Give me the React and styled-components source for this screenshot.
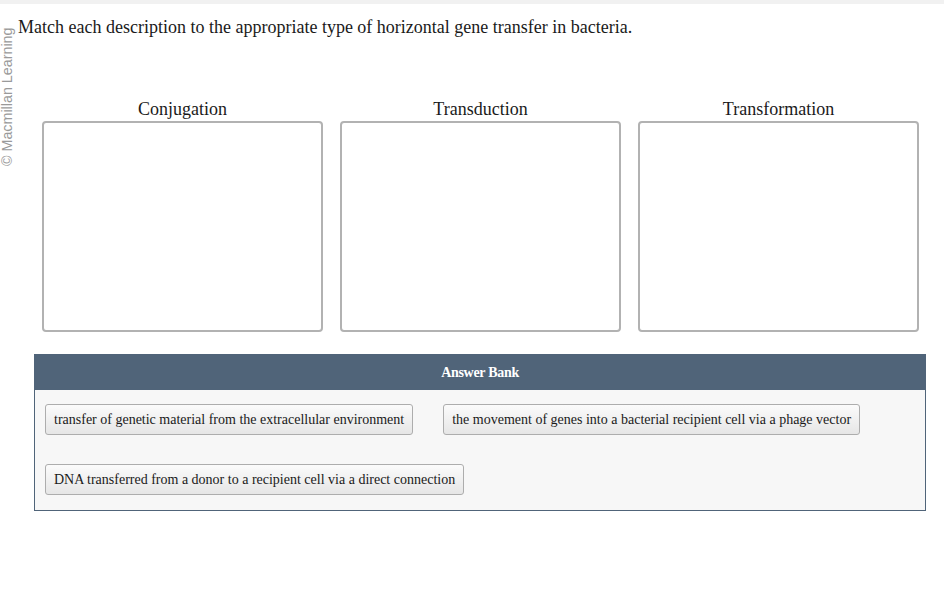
import React from 'react'
import styled, { createGlobalStyle } from 'styled-components'

const GlobalStyle = createGlobalStyle`
  html, body {
    margin: 0;
    padding: 0;
    background: #fff;
  }
  body {
    font-family: 'Liberation Serif', 'Times New Roman', serif;
    color: #222;
  }
`

const Page = styled.div`
  position: relative;
  width: 944px;
  height: 591px;
  border-top: 4px solid #f1f1f1;
  box-sizing: border-box;
`

const Watermark = styled.div`
  position: absolute;
  left: 0;
  top: 162px;
  transform-origin: 0 0;
  transform: rotate(-90deg);
  font-family: 'Liberation Sans', Arial, sans-serif;
  font-size: 14.3px;
  line-height: 14px;
  color: #9a9a9a;
  white-space: nowrap;
`

const Content = styled.div`
  padding: 11px 18px 0 34px;
`

const Prompt = styled.p`
  margin: 0 0 0 -16px;
  font-size: 18px;
  line-height: 24px;
  color: #1a1a1a;
`

const Columns = styled.div`
  display: grid;
  grid-template-columns: repeat(3, 281px);
  column-gap: 17px;
  margin: 60px 0 0 8px;
`

const Column = styled.div`
  display: flex;
  flex-direction: column;
  align-items: center;
`

const ColumnTitle = styled.div`
  font-size: 18px;
  line-height: 21px;
  color: #1a1a1a;
  margin-bottom: 1px;
`

const DropZone = styled.div`
  width: 100%;
  height: 211px;
  box-sizing: border-box;
  border: 2px solid #b2b2b2;
  border-radius: 4px;
  background: #fff;
`

const Bank = styled.div`
  margin-top: 22px;
  width: 892px;
  box-sizing: border-box;
  border: 1px solid #506479;
  background: #f7f7f7;
`

const BankHeader = styled.div`
  background: #506479;
  color: #fff;
  font-weight: bold;
  font-size: 14px;
  height: 35px;
  display: flex;
  align-items: center;
  justify-content: center;
  letter-spacing: -0.3px;
`

const BankBody = styled.div`
  display: flex;
  flex-wrap: wrap;
  column-gap: 30px;
  row-gap: 29px;
  padding: 14px 10px 15px 10px;
`

const Chip = styled.div`
  box-sizing: border-box;
  height: 31px;
  padding: 0 8px;
  display: flex;
  align-items: center;
  font-size: 14px;
  color: #1a1a1a;
  border: 1px solid #adadad;
  border-radius: 3px;
  background: linear-gradient(#fbfbfb, #e6e6e6);
  white-space: nowrap;
`

const zones = ['Conjugation', 'Transduction', 'Transformation']

const answers = [
  'transfer of genetic material from the extracellular environment',
  'the movement of genes into a bacterial recipient cell via a phage vector',
  'DNA transferred from a donor to a recipient cell via a direct connection'
]

export default function App () {
  return (
    <Page>
      <GlobalStyle />
      <Watermark>© Macmillan Learning</Watermark>
      <Content>
        <Prompt>
          Match each description to the appropriate type of horizontal gene transfer in bacteria.
        </Prompt>
        <Columns>
          {zones.map(z => (
            <Column key={z}>
              <ColumnTitle>{z}</ColumnTitle>
              <DropZone />
            </Column>
          ))}
        </Columns>
        <Bank>
          <BankHeader>Answer Bank</BankHeader>
          <BankBody>
            {answers.map(a => (
              <Chip key={a}>{a}</Chip>
            ))}
          </BankBody>
        </Bank>
      </Content>
    </Page>
  )
}
